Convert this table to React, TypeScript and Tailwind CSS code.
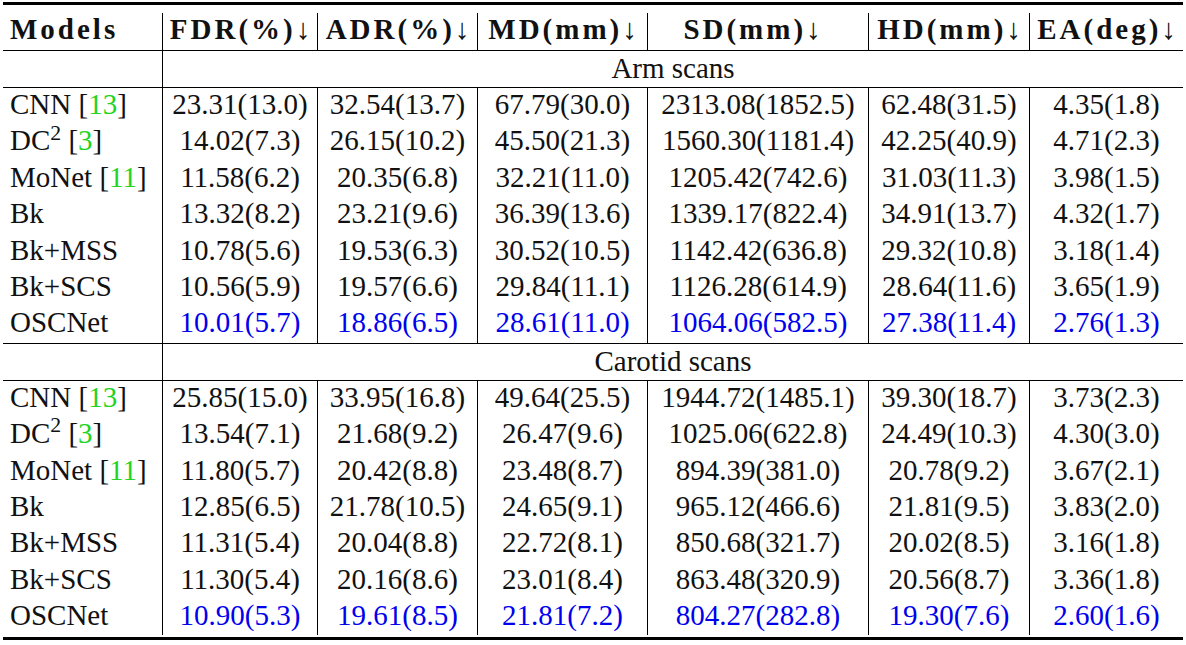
import type { ReactNode } from 'react'

const W = [
  'w-[159px]',
  'w-[155px]',
  'w-[160px]',
  'w-[170px]',
  'w-[221px]',
  'w-[161px]',
  'w-[154px]'
]

const Cite = ({ n }: { n: number }) => (
  <>
    [<span className="text-[#1fd41f]">{n}</span>]
  </>
)

const headers = ['FDR(%)', 'ADR(%)', 'MD(mm)', 'SD(mm)', 'HD(mm)', 'EA(deg)']

const models: ReactNode[] = [
  <>
    CNN <Cite n={13} />
  </>,
  <>
    DC<sup>2</sup> <Cite n={3} />
  </>,
  <>
    MoNet <Cite n={11} />
  </>,
  'Bk',
  'Bk+MSS',
  'Bk+SCS',
  'OSCNet'
]

const arm = [
  ['23.31(13.0)', '32.54(13.7)', '67.79(30.0)', '2313.08(1852.5)', '62.48(31.5)', '4.35(1.8)'],
  ['14.02(7.3)', '26.15(10.2)', '45.50(21.3)', '1560.30(1181.4)', '42.25(40.9)', '4.71(2.3)'],
  ['11.58(6.2)', '20.35(6.8)', '32.21(11.0)', '1205.42(742.6)', '31.03(11.3)', '3.98(1.5)'],
  ['13.32(8.2)', '23.21(9.6)', '36.39(13.6)', '1339.17(822.4)', '34.91(13.7)', '4.32(1.7)'],
  ['10.78(5.6)', '19.53(6.3)', '30.52(10.5)', '1142.42(636.8)', '29.32(10.8)', '3.18(1.4)'],
  ['10.56(5.9)', '19.57(6.6)', '29.84(11.1)', '1126.28(614.9)', '28.64(11.6)', '3.65(1.9)'],
  ['10.01(5.7)', '18.86(6.5)', '28.61(11.0)', '1064.06(582.5)', '27.38(11.4)', '2.76(1.3)']
]

const carotid = [
  ['25.85(15.0)', '33.95(16.8)', '49.64(25.5)', '1944.72(1485.1)', '39.30(18.7)', '3.73(2.3)'],
  ['13.54(7.1)', '21.68(9.2)', '26.47(9.6)', '1025.06(622.8)', '24.49(10.3)', '4.30(3.0)'],
  ['11.80(5.7)', '20.42(8.8)', '23.48(8.7)', '894.39(381.0)', '20.78(9.2)', '3.67(2.1)'],
  ['12.85(6.5)', '21.78(10.5)', '24.65(9.1)', '965.12(466.6)', '21.81(9.5)', '3.83(2.0)'],
  ['11.31(5.4)', '20.04(8.8)', '22.72(8.1)', '850.68(321.7)', '20.02(8.5)', '3.16(1.8)'],
  ['11.30(5.4)', '20.16(8.6)', '23.01(8.4)', '863.48(320.9)', '20.56(8.7)', '3.36(1.8)'],
  ['10.90(5.3)', '19.61(8.5)', '21.81(7.2)', '804.27(282.8)', '19.30(7.6)', '2.60(1.6)']
]

const Rule = () => <div className="h-px bg-black" />

const Section = ({ title }: { title: string }) => (
  <div className="flex h-[36px]">
    <div className={W[0]} />
    <div className="flex-1 border-l border-black pt-[1px] text-center">
      {title}
    </div>
  </div>
)

const Body = ({ rows }: { rows: string[][] }) => (
  <>
    {rows.map((r, i) => {
      const best = i === rows.length - 1
      return (
        <div key={i} className="flex h-[36.4px]">
          <div className={`${W[0]} pl-[7px] whitespace-nowrap`}>{models[i]}</div>
          {r.map((v, j) => (
            <div
              key={j}
              className={`${W[j + 1]} border-l border-black text-center whitespace-nowrap ${
                best ? 'text-[#0000ee]' : ''
              }`}
            >
              {v}
            </div>
          ))}
        </div>
      )
    })}
  </>
)

const App = () => {
  return (
    <div className="w-[1186px] h-[645px] bg-white pl-[3px] pt-[2px] [font-family:'Liberation_Serif',serif] text-[29px] leading-[32px] text-[#111]">
      <div className="w-[1180px]">
        <div className="h-[3px] bg-black" />
        <div className="flex pt-[8px] font-bold tracking-[3px]">
          <div className={`${W[0]} h-[37px] pl-[7px]`}>Models</div>
          {headers.map((h, j) => (
            <div
              key={h}
              className={`${W[j + 1]} h-[37px] border-l border-black text-center whitespace-nowrap ${
                j === 3 ? 'pr-[12px]' : ''
              }`}
            >
              {h}
              <span className="font-normal tracking-normal">↓</span>
            </div>
          ))}
        </div>
        <Rule />
        <Section title="Arm scans" />
        <Rule />
        <Body rows={arm} />
        <Rule />
        <Section title="Carotid scans" />
        <Rule />
        <Body rows={carotid} />
        <div className="mt-[2px] h-[3px] bg-black" />
      </div>
    </div>
  )
}

export default App
